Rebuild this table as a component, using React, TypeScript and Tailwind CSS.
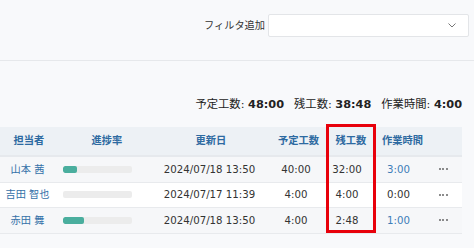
import React from "react";

const font = { fontFamily: '"DejaVu Sans", "Noto Sans CJK JP", sans-serif' };

type Row = {
  name: string;
  fill: number;
  date: string;
  plan: string;
  remain: string;
  work: string;
  workLink: boolean;
  bg: string;
};

const rows: Row[] = [
  { name: "山本 茜", fill: 14, date: "2024/07/18 13:50", plan: "40:00", remain: "32:00", work: "3:00", workLink: true, bg: "bg-[#f6f7f9]" },
  { name: "吉田 智也", fill: 0, date: "2024/07/17 11:39", plan: "4:00", remain: "4:00", work: "0:00", workLink: false, bg: "bg-white" },
  { name: "赤田 舞", fill: 21, date: "2024/07/18 13:50", plan: "4:00", remain: "2:48", work: "1:00", workLink: true, bg: "bg-[#f6f7f9]" },
];

const cols = "grid grid-cols-[58px_98px_114px_57px_48px_55px_32px]";

function Dots() {
  return (
    <div className="flex gap-[1.5px] items-center">
      <span className="w-[2px] h-[2px] bg-[#666] rounded-full" />
      <span className="w-[2px] h-[2px] bg-[#666] rounded-full" />
      <span className="w-[2px] h-[2px] bg-[#666] rounded-full" />
    </div>
  );
}

export default function App() {
  return (
    <div className="w-[474px] h-[248px] bg-[#f8f9fb] overflow-hidden" style={font}>
      <div className="h-[60px] flex items-start justify-end pt-[14px] pr-[5px] gap-[3px]">
        <span className="text-[10.2px] text-[#333] leading-[23px]">フィルタ追加</span>
        <div className="w-[201px] h-[23px] bg-white border border-[#e3e5e8] rounded-[2px] flex items-center justify-end pr-[12px]">
          <svg width="8" height="5" viewBox="0 0 8 5" fill="none">
            <path d="M0.5 0.5 L4 4 L7.5 0.5" stroke="#777" strokeWidth="1" />
          </svg>
        </div>
      </div>
      <div className="h-px bg-[#e6e8eb]" />
      <div className="w-[462px]">
        <div className="h-[66px] flex items-start justify-end pt-[36px] gap-[10px] text-[11.3px] text-[#222] leading-[15px]">
          <span>予定工数: <b>48:00</b></span>
          <span>残工数: <b>38:48</b></span>
          <span>作業時間: <b>4:00</b></span>
        </div>
        <div className="relative">
          <div className={`${cols} h-[30px] bg-[#edf1f5] border-b-2 border-[#e6e9ed] items-center text-[10.25px] font-bold text-[#2d6aa1]`}>
            <div className="text-center">担当者</div>
            <div className="text-center">進捗率</div>
            <div className="text-center pr-1">更新日</div>
            <div className="text-center">予定工数</div>
            <div className="text-center">残工数</div>
            <div className="text-center">作業時間</div>
            <div />
          </div>
          {rows.map((r) => (
            <div key={r.name} className={`${cols} h-[25.5px] ${r.bg} border-b border-[#e8eaed] items-center text-[10.2px] text-[#333]`}>
              <div className="text-center pr-[3px] text-[#3471a8]">{r.name}</div>
              <div className="pl-[5px]">
                <div className="w-[69px] h-[7px] bg-[#ececec] rounded-[2px] overflow-hidden">
                  {r.fill > 0 && <div className="h-full bg-[#4aae9e] rounded-[2px]" style={{ width: r.fill }} />}
                </div>
              </div>
              <div className="text-center pr-[7px]">{r.date}</div>
              <div className="text-center pr-[5px]">{r.plan}</div>
              <div className="text-center pr-[8px]">{r.remain}</div>
              <div className={`text-center pr-[8px] ${r.workLink ? "text-[#3d7db8]" : ""}`}>{r.work}</div>
              <div className="flex justify-center pr-[6px]"><Dots /></div>
            </div>
          ))}
          <div className="absolute left-[326px] top-[-3px] w-[50px] h-[109px] border-[3px] border-[#e8000b] pointer-events-none" />
        </div>
      </div>
    </div>
  );
}
